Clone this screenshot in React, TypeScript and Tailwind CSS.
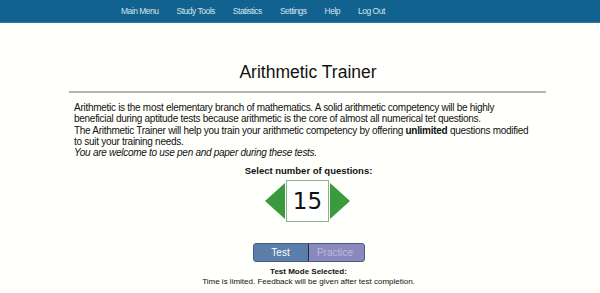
import { useState } from "react";

const navItems = ["Main Menu", "Study Tools", "Statistics", "Settings", "Help", "Log Out"];

export default function App() {
    const [count, setCount] = useState(15);
    const [mode, setMode] = useState<"test" | "practice">("test");

    return (
        <div className="min-h-[293px] bg-[#fffffb] text-black" style={{ fontFamily: '"Liberation Sans", Arial, sans-serif' }}>
            {/* Top navigation */}
            <nav className="h-[23px] bg-[#11628f] border-b border-[#2a7aa5] flex items-center gap-[18px] pl-[121px]">
                {navItems.map((item) => (
                    <a key={item} className="text-[8.5px] tracking-[-0.5px] text-[#d3e1ec] cursor-pointer">
                        {item}
                    </a>
                ))}
            </nav>

            <div className="w-[477px] ml-[69px]">
                <h1 className="text-[17.5px] text-center pt-[38px] leading-[22px] pl-[1px] text-[#111]">Arithmetic Trainer</h1>
                <hr className="mt-[8px] border-0 h-[2px] bg-[#b5b5b3]" />

                <div className="pl-[5px] pt-[9px] text-[10px] tracking-[-0.28px] leading-[11.3px] text-[#111] whitespace-nowrap">
                    <p>
                        Arithmetic is the most elementary branch of mathematics. A solid arithmetic competency will be highly
                        <br />
                        beneficial during aptitude tests because arithmetic is the core of almost all numerical tet questions.
                    </p>
                    <p>
                        The Arithmetic Trainer will help you train your arithmetic competency by offering <b>unlimited</b> questions modified
                        <br />
                        to suit your training needs.
                    </p>
                    <p className="italic">You are welcome to use pen and paper during these tests.</p>
                </div>

                <div className="flex flex-col items-center pl-[2px]">
                    <div className="mt-[7px] text-[9.5px] font-bold leading-[12px] text-[#111]">Select number of questions:</div>

                    <div className="mt-[3px] flex items-center gap-[1px] pr-[2px]">
                        <button onClick={() => setCount(Math.max(1, count - 1))} className="w-[20px] h-[36px] flex items-center">
                            <svg width="20" height="36" viewBox="0 0 20 36">
                                <polygon points="20,0 20,36 0,18" fill="#3a9a3e" />
                            </svg>
                        </button>
                        <div className="w-[43px] h-[42px] border border-[#8fb08f] bg-white flex items-center justify-center text-[23px] text-[#111]" style={{ fontFamily: '"DejaVu Sans", sans-serif' }}>
                            {count}
                        </div>
                        <button onClick={() => setCount(count + 1)} className="w-[20px] h-[36px] flex items-center">
                            <svg width="20" height="36" viewBox="0 0 20 36">
                                <polygon points="0,0 0,36 20,18" fill="#3a9a3e" />
                            </svg>
                        </button>
                    </div>

                    <div className="mt-[21px] flex rounded-[3px] overflow-hidden border border-[#4a5c7a] pr-[2px] bg-[#8a89bd]">
                        <button
                            onClick={() => setMode("test")}
                            className={`w-[55px] h-[17px] text-[10px] leading-[17px] border-r ${mode === "test" ? "bg-[#5b7daa] text-white border-[#1f2a3a]" : "bg-[#8a89bd] text-[#b9b9dd] border-[#8a89bd]"}`}
                        >
                            Test
                        </button>
                        <button
                            onClick={() => setMode("practice")}
                            className={`w-[53px] h-[17px] text-[10px] leading-[17px] ${mode === "practice" ? "bg-[#5b7daa] text-white" : "bg-[#8a89bd] text-[#b9b9dd]"}`}
                        >
                            Practice
                        </button>
                    </div>

                    <div className="mt-[5px] text-[8px] font-bold leading-[10px] text-[#111]">
                        {mode === "test" ? "Test Mode Selected:" : "Practice Mode Selected:"}
                    </div>
                    <div className="text-[8px] leading-[10px] text-[#111]">
                        {mode === "test"
                            ? "Time is limited. Feedback will be given after test completion."
                            : "Time is unlimited. Feedback will be given after each question."}
                    </div>
                </div>
            </div>
        </div>
    );
}
